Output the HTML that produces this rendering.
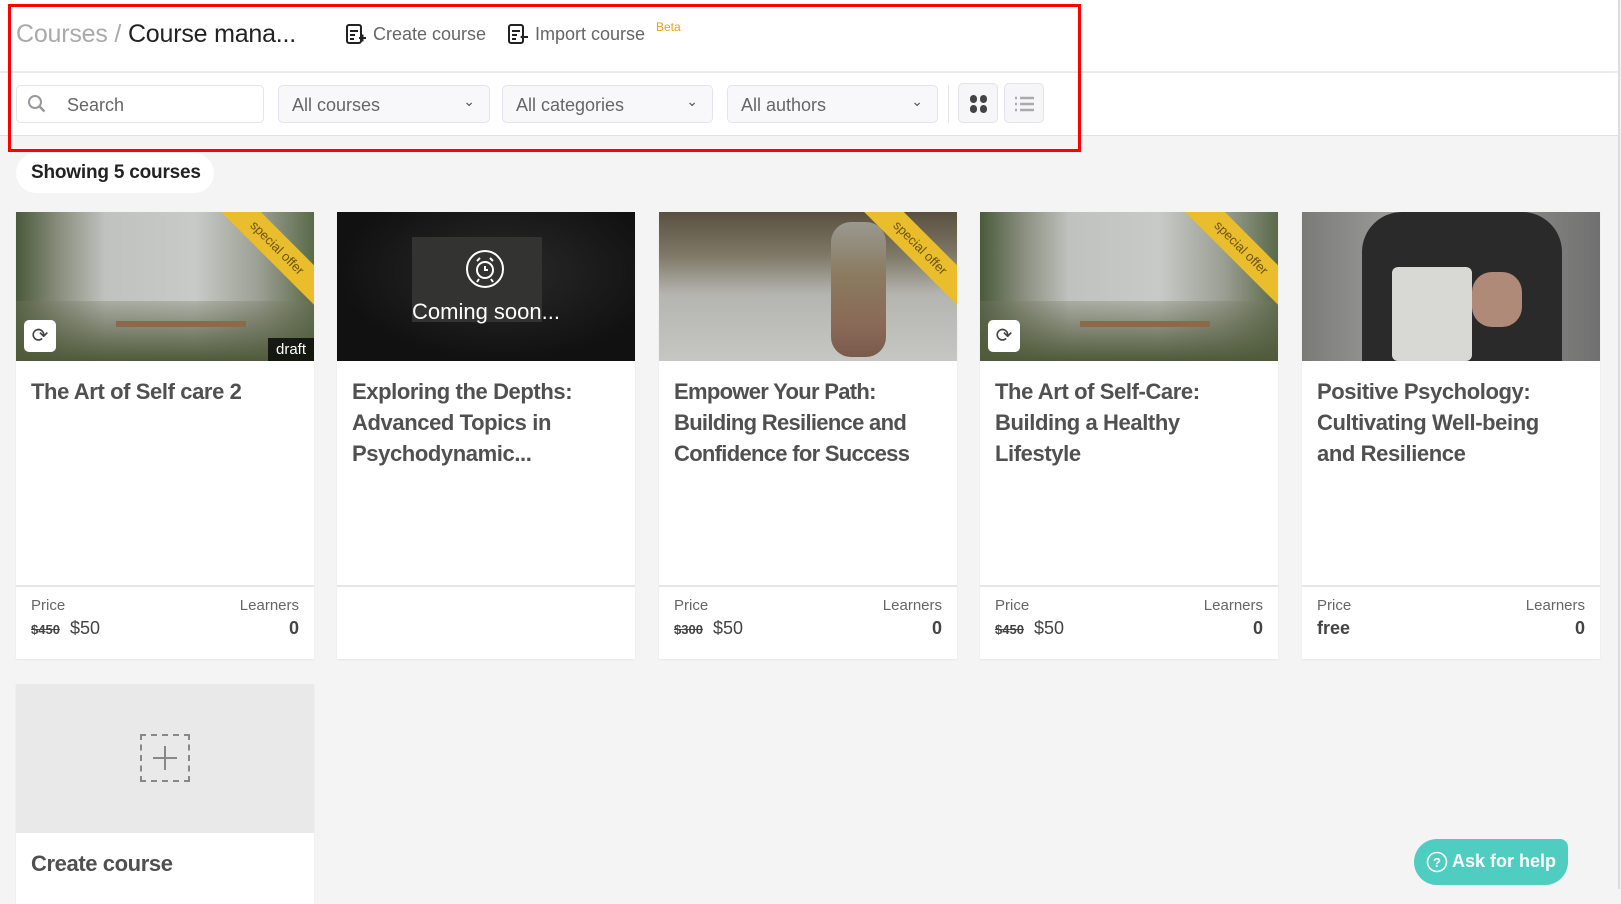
<!DOCTYPE html>
<html><head><meta charset="utf-8"><style>
*{box-sizing:border-box;margin:0;padding:0}
body{width:1621px;height:889px;overflow:hidden;background:#f4f4f4;font-family:"Liberation Sans",sans-serif;position:relative;color:#555}
.hdr{position:absolute;left:0;top:0;width:1618px;height:72px;background:#fff;border-bottom:1px solid #ececec;box-shadow:0 2px 4px rgba(0,0,0,.05)}
.flt{position:absolute;left:0;top:73px;width:1618px;height:63px;background:#fff;border-bottom:1px solid #e2e2e2}
.vline{position:absolute;left:1618px;top:0;width:2px;height:889px;background:#ddd}
.bc{position:absolute;left:16px;top:20px;font-size:25px;color:#222;white-space:nowrap;letter-spacing:-.2px}
.bc span{color:#aaa}
.act{position:absolute;top:23px;font-size:18px;color:#666;display:flex;align-items:center;gap:6px;white-space:nowrap}
.beta{position:absolute;left:656px;top:20px;font-size:12px;color:#f39c12}
.inp{position:absolute;top:85px;height:38px;border:1px solid #e3e3ee;border-radius:5px;background:#f8f8fa;font-size:18px;color:#666;padding:9px 13px;}
.inp .ch{position:absolute;right:14px;top:7px;font-size:14px;color:#555}
.vbtn{position:absolute;top:83px;width:40px;height:40px;border:1px solid #e3e3ee;border-radius:5px;background:#f6f6f8}
.red{position:absolute;left:8px;top:4px;width:1073px;height:148px;border:3px solid #f00}
.pill{position:absolute;left:16px;top:153px;width:198px;height:40px;background:#fff;border-radius:20px;font-size:19px;color:#222;padding:9px 15px;white-space:nowrap;letter-spacing:-.2px;font-weight:bold}
.card{position:absolute;top:212px;width:298px;height:447px;background:#fff;box-shadow:0 1px 2px rgba(0,0,0,.06)}
.img{position:absolute;left:0;top:0;width:298px;height:149px;overflow:hidden}
.ttl{position:absolute;left:15px;top:164px;right:8px;font-size:22px;font-weight:bold;line-height:31px;color:#505050;letter-spacing:-.4px}
.ft{position:absolute;left:0;top:373px;width:298px;border-top:2px solid #e6e6e6}
.lab{position:absolute;top:10px;font-size:15px;color:#666}
.val{position:absolute;top:31px;font-size:18px;color:#444;font-weight:bold}
.so{position:absolute;right:-38px;top:22px;width:150px;height:28px;background:#e9bd2c;transform:rotate(45deg);text-align:center;font-size:13px;color:#6b5410;line-height:28px}
.ref{position:absolute;left:8px;top:108px;width:32px;height:32px;background:#fff;border-radius:5px;text-align:center;font-size:20px;line-height:32px;color:#444}
.sl{background:linear-gradient(90deg,#4a5a3a 0%,#8c9080 15%,#bfc2be 30%,#c8cac7 60%,#9a9e92 82%,#5a6a48 100%)}
</style></head><body>
<div class="hdr"></div><div class="flt"></div><div class="vline"></div>
<div class="bc"><span>Courses / </span>Course mana...</div>
<div class="act" style="left:345px"><svg width="22" height="22" viewBox="0 0 22 22"><rect x="2" y="2" width="14" height="18" rx="2" fill="none" stroke="#222" stroke-width="2"/><path d="M5 8h8M5 12h5M5 16h4M14 15h7M17.5 11.5v7" stroke="#222" stroke-width="2"/></svg>Create course</div>
<div class="act" style="left:507px"><svg width="22" height="22" viewBox="0 0 22 22"><rect x="2" y="2" width="14" height="18" rx="2" fill="none" stroke="#222" stroke-width="2"/><path d="M5 8h8M5 12h5M5 16h4M14 14h7" stroke="#222" stroke-width="2"/><path d="M13 14l4-3v6z" fill="#222"/></svg>Import course</div>
<div class="beta">Beta</div>
<div class="inp" style="left:16px;width:248px;background:#fff;padding-left:50px"><svg style="position:absolute;left:10px;top:8px" width="20" height="20" viewBox="0 0 20 20"><circle cx="8" cy="8" r="6" fill="none" stroke="#999" stroke-width="2"/><path d="M12.5 12.5l5 5" stroke="#999" stroke-width="2.5"/></svg>Search</div>
<div class="inp" style="left:278px;width:212px">All courses<span class="ch">⌄</span></div>
<div class="inp" style="left:502px;width:211px">All categories<span class="ch">⌄</span></div>
<div class="inp" style="left:727px;width:211px">All authors<span class="ch">⌄</span></div>
<div style="position:absolute;left:948px;top:85px;width:1px;height:38px;background:#e6e6e6"></div>
<div class="vbtn" style="left:958px"><svg style="position:absolute;left:10px;top:10px" width="20" height="20" viewBox="0 0 20 20" fill="#444"><rect x="1" y="1" width="7" height="8" rx="3.5"/><rect x="11" y="1" width="7" height="8" rx="3.5"/><rect x="1" y="11" width="7" height="8" rx="3.5"/><rect x="11" y="11" width="7" height="8" rx="3.5"/></svg></div>
<div class="vbtn" style="left:1004px"><svg style="position:absolute;left:9px;top:11px" width="22" height="18" viewBox="0 0 22 18" stroke="#aaa" stroke-width="2.5"><path d="M1 3h2M6 3h14M1 9h2M6 9h14M1 15h2M6 15h14"/></svg></div>
<div class="red"></div>
<div class="pill">Showing 5 courses</div>

<div class="card" style="left:16px"><div class="img sl"><div style="position:absolute;left:0;bottom:0;width:298px;height:60px;background:linear-gradient(0deg,#4f5a3a,rgba(120,120,100,.3))"></div><div style="position:absolute;left:100px;top:35px;width:130px;height:80px;border-bottom:6px solid #8a6a4a"></div><div class="so">special offer</div><div class="ref">⟳</div><div style="position:absolute;right:0;bottom:0;background:rgba(0,0,0,.75);color:#fff;font-size:15px;padding:3px 8px">draft</div></div><div class="ttl">The Art of Self care 2</div><div class="ft"><span class="lab" style="left:15px">Price</span><span class="lab" style="right:15px">Learners</span><span class="val" style="left:15px"><s style="font-size:13px">$450</s>&nbsp; <span style="font-weight:normal">$50</span></span><span class="val" style="right:15px">0</span></div></div>

<div class="card" style="left:337px"><div class="img" style="background:radial-gradient(ellipse at 55% 40%,#2a2a2a,#111 70%)"><div style="position:absolute;left:75px;top:25px;width:130px;height:85px;background:#333331"></div><svg style="position:absolute;left:128px;top:37px" width="40" height="40" viewBox="0 0 40 40" fill="none" stroke="#fff" stroke-width="2"><circle cx="20" cy="20" r="18"/><circle cx="20" cy="21" r="8"/><path d="M20 17v4h3M12 12l3-3M28 12l-3-3M14 30l-2 3M26 30l2 3"/></svg><div style="position:absolute;left:0;top:87px;width:298px;text-align:center;color:#fff;font-size:22px">Coming soon...</div></div><div class="ttl">Exploring the Depths: Advanced Topics in Psychodynamic...</div><div class="ft"></div></div>

<div class="card" style="left:659px"><div class="img" style="background:linear-gradient(180deg,#5a5040 0%,#807a68 30%,#b4b4b0 55%,#c6c6c2 100%)"><div style="position:absolute;left:172px;top:10px;width:55px;height:135px;background:linear-gradient(180deg,#9a9890,#8a7a60 40%,#8a6a58 75%,#7a5a4a);border-radius:20px"></div><div class="so">special offer</div></div><div class="ttl" style="letter-spacing:-.7px">Empower Your Path: Building Resilience and Confidence for Success</div><div class="ft"><span class="lab" style="left:15px">Price</span><span class="lab" style="right:15px">Learners</span><span class="val" style="left:15px"><s style="font-size:13px">$300</s>&nbsp; <span style="font-weight:normal">$50</span></span><span class="val" style="right:15px">0</span></div></div>

<div class="card" style="left:980px"><div class="img sl"><div style="position:absolute;left:0;bottom:0;width:298px;height:60px;background:linear-gradient(0deg,#4f5a3a,rgba(120,120,100,.3))"></div><div style="position:absolute;left:100px;top:35px;width:130px;height:80px;border-bottom:6px solid #8a6a4a"></div><div class="so">special offer</div><div class="ref">⟳</div></div><div class="ttl">The Art of Self-Care: Building a Healthy Lifestyle</div><div class="ft"><span class="lab" style="left:15px">Price</span><span class="lab" style="right:15px">Learners</span><span class="val" style="left:15px"><s style="font-size:13px">$450</s>&nbsp; <span style="font-weight:normal">$50</span></span><span class="val" style="right:15px">0</span></div></div>

<div class="card" style="left:1302px"><div class="img" style="background:linear-gradient(90deg,#7a7a78,#9a9a98 30%,#8a8a88 70%,#707070)"><div style="position:absolute;left:60px;top:0;width:200px;height:149px;background:#2a2a2a;border-radius:40px 40px 0 0"></div><div style="position:absolute;left:90px;top:55px;width:80px;height:94px;background:#d8d8d4;border-radius:6px"></div><div style="position:absolute;left:170px;top:60px;width:50px;height:55px;background:#b08a78;border-radius:20px"></div></div><div class="ttl" style="right:30px">Positive Psychology: Cultivating Well-being and Resilience</div><div class="ft"><span class="lab" style="left:15px">Price</span><span class="lab" style="right:15px">Learners</span><span class="val" style="left:15px">free</span><span class="val" style="right:15px">0</span></div></div>

<div class="card" style="left:16px;top:684px;height:220px"><div class="img" style="background:#e9e9e9"><div style="position:absolute;left:124px;top:50px;width:50px;height:48px;border:2px dashed #888"></div><div style="position:absolute;left:137px;top:73px;width:24px;height:2px;background:#888"></div><div style="position:absolute;left:148px;top:62px;width:2px;height:24px;background:#888"></div></div><div class="ttl" style="top:164px">Create course</div></div>

<div style="position:absolute;left:1414px;top:839px;width:154px;height:46px;background:#4ecdc0;border-radius:23px 8px 23px 23px;color:#fff;font-weight:bold;font-size:18px;padding:12px 0 0 38px;white-space:nowrap">Ask for help<svg style="position:absolute;left:12px;top:12px" width="22" height="22" viewBox="0 0 22 22"><circle cx="11" cy="11" r="9.5" fill="none" stroke="#fff" stroke-width="1.6"/><text x="11" y="16" text-anchor="middle" font-size="13" fill="#fff" font-family="Liberation Sans">?</text></svg></div>
</body></html>
